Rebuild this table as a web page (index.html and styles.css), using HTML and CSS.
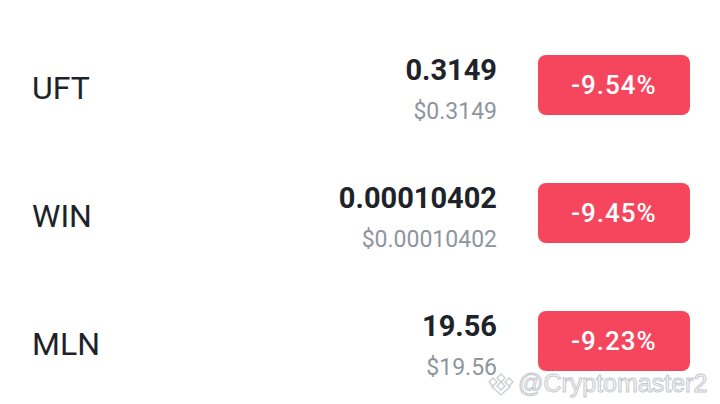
FILE: index.html
```html
<!DOCTYPE html>
<html>
<head>
<meta charset="utf-8">
<link rel="stylesheet" href="styles.css">
</head>
<body>
<div class="list">
  <div class="row">
    <div class="name">UFT</div>
    <div class="price">
      <div class="last">0.3149</div>
      <div class="usd">$0.3149</div>
    </div>
    <div class="badge">-9.54%</div>
  </div>
  <div class="row">
    <div class="name">WIN</div>
    <div class="price">
      <div class="last">0.00010402</div>
      <div class="usd">$0.00010402</div>
    </div>
    <div class="badge">-9.45%</div>
  </div>
  <div class="row">
    <div class="name">MLN</div>
    <div class="price">
      <div class="last">19.56</div>
      <div class="usd">$19.56</div>
    </div>
    <div class="badge">-9.23%</div>
  </div>
</div>
<div class="watermark">
  <svg class="wm-logo" width="30" height="24" viewBox="0 0 30 24">
    <g fill="none" stroke="#c9ccd1" stroke-width="1.3">
      <path d="M15 2 L19 6 L15 10 L11 6 Z"/>
      <path d="M7 6 L11 10 L7 14 L3 10 Z"/>
      <path d="M23 6 L27 10 L23 14 L19 10 Z"/>
      <path d="M15 10 L19 14 L15 18 L11 14 Z"/>
      <path d="M5 14 L15 23 L25 14"/>
    </g>
  </svg>
  <span class="wm-text">@Cryptomaster2</span>
</div>
</body>
</html>
```
FILE: styles.css
```css
html, body {
  margin: 0;
  padding: 0;
  background: #ffffff;
}
body {
  width: 720px;
  height: 404px;
  overflow: hidden;
  position: relative;
  font-family: Roboto, "Noto Sans", sans-serif;
}
.list {
  padding-top: 21px;
}
.row {
  height: 128px;
  display: flex;
  align-items: center;
  padding: 0 30px 0 32px;
}
.name {
  flex: 1;
  font-size: 32px;
  font-weight: 400;
  color: #1e2329;
  margin-top: 6px;
}
.price {
  text-align: right;
  display: flex;
  flex-direction: column;
  align-items: flex-end;
  margin-top: 10px;
}
.last {
  font-size: 29px;
  font-weight: 700;
  color: #1e2329;
  line-height: 34px;
}
.usd {
  font-size: 23px;
  color: #8f959e;
  line-height: 30px;
  margin-top: 10px;
}
.badge {
  width: 152px;
  height: 60px;
  margin-left: 41px;
  border-radius: 8px;
  background: #f6465d;
  color: #ffffff;
  font-size: 26px;
  font-weight: 500;
  letter-spacing: 1px;
  display: flex;
  align-items: center;
  justify-content: center;
}
.watermark {
  position: absolute;
  left: 486px;
  top: 369px;
  display: flex;
  align-items: center;
  gap: 2px;
}
.wm-text {
  font-family: "Liberation Sans", Arial, sans-serif;
  font-size: 25px;
  color: #ffffff;
  -webkit-text-stroke: 1px #c4c7cc;
}
```
